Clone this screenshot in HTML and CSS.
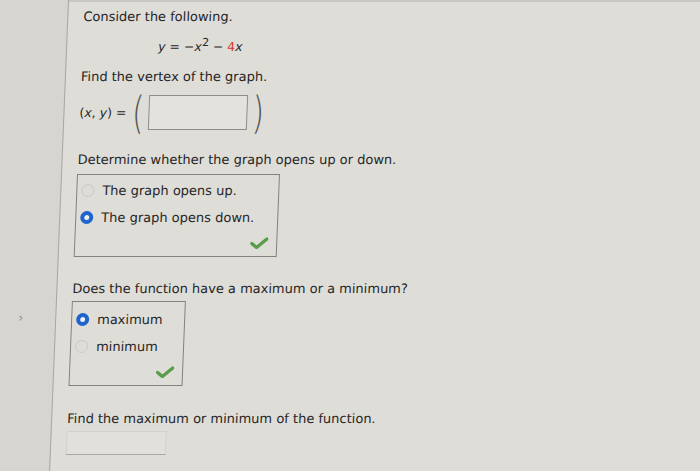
FILE: index.html
```html
<!DOCTYPE html>
<html>
<head>
<meta charset="utf-8">
<link rel="stylesheet" href="styles.css">
</head>
<body>
<div class="frame">
<div class="screen">
  <div class="sidebar"><span class="mark">›</span></div>
  <div class="main">
    <p class="line first">Consider the following.</p>
    <p class="eq"><i>y</i> = −<i>x</i><sup>2</sup> − <span class="red">4</span><i>x</i></p>
    <p class="line gap14">Find the vertex of the graph.</p>
    <div class="vertex">
      <span class="xy">(<i>x</i>, <i>y</i>) =</span>
      <span class="paren">(</span>
      <span class="answer"></span>
      <span class="paren">)</span>
    </div>
    <p class="line gap15">Determine whether the graph opens up or down.</p>
    <div class="choices wide">
      <div class="opt"><span class="radio"></span>The graph opens up.</div>
      <div class="opt"><span class="radio on"></span>The graph opens down.</div>
      <div class="checkrow"><svg class="check" viewBox="0 0 18 12" width="18" height="12"><path d="M1.5 6.5 L6.5 10.5 L16.5 2" fill="none" stroke="#5a9c4e" stroke-width="3.4" stroke-linecap="round" stroke-linejoin="round"/></svg></div>
    </div>
    <p class="line gap24">Does the function have a maximum or a minimum?</p>
    <div class="choices narrow">
      <div class="opt"><span class="radio on"></span>maximum</div>
      <div class="opt"><span class="radio"></span>minimum</div>
      <div class="checkrow"><svg class="check" viewBox="0 0 18 12" width="18" height="12"><path d="M1.5 6.5 L6.5 10.5 L16.5 2" fill="none" stroke="#5a9c4e" stroke-width="3.4" stroke-linecap="round" stroke-linejoin="round"/></svg></div>
    </div>
    <p class="line gap25">Find the maximum or minimum of the function.</p>
    <div class="blank"></div>
  </div>
</div>
</div>
</body>
</html>
```

FILE: styles.css
```css
html, body {
  margin: 0;
  padding: 0;
  width: 700px;
  height: 471px;
  overflow: hidden;
  background: #dfddd8;
}
.frame {
  width: 700px;
  height: 471px;
  overflow: hidden;
}
.screen {
  display: flex;
  height: 471px;
  width: 700px;
  transform: skewX(-2.3deg);
  transform-origin: 0 0;
  font-family: "DejaVu Sans", Verdana, sans-serif;
  font-size: 13px;
  color: #262626;
}
.sidebar {
  width: 68px;
  flex: none;
  background: #d7d5d0;
  border-right: 1px solid #a9a7a2;
  position: relative;
}
.mark {
  position: absolute;
  left: 31px;
  top: 310px;
  color: #8e8c88;
  font-size: 13px;
}
.main {
  flex: 1;
  background: #dfddd8;
  padding-left: 15px;
  border-top: 2px solid #c9c7c2;
  box-sizing: border-box;
}
p { margin: 0; }
.line { line-height: 16px; }
.first { margin-top: 7px; }
.eq {
  margin-top: 14px;
  line-height: 16px;
  padding-left: 76px;
  font-size: 12.5px;
}
.eq sup { font-size: 11px; line-height: 0; }
.red { color: #d23b36; }
.gap14 { margin-top: 14px; }
.gap15 { margin-top: 15px; }
.gap24 { margin-top: 24px; }
.gap25 { margin-top: 25px; }
.vertex {
  margin-top: 3px;
  height: 49px;
  display: flex;
  align-items: center;
}
.xy { font-size: 12.5px; margin-right: 3px; }
.paren {
  font-size: 44px;
  font-weight: 200;
  line-height: 49px;
  color: #555;
  transform: scaleX(0.7);
}
.answer {
  width: 97px;
  height: 33px;
  border: 1px solid #8e8d89;
  background: #e4e2dd;
  margin: 0 2px;
}
.choices {
  border: 1px solid #838280;
  box-sizing: border-box;
  padding: 2px 0 0 4px;
}
.wide { margin-top: 6px; width: 203px; height: 83px; }
.narrow { margin-top: 4px; width: 114px; height: 85px; padding-top: 4px; }
.opt {
  display: flex;
  align-items: center;
  height: 27px;
  line-height: 16px;
}
.radio {
  width: 13px;
  height: 13px;
  box-sizing: border-box;
  border-radius: 50%;
  border: 1px solid #cccac5;
  background: #dedcd7;
  margin-right: 8px;
  flex: none;
}
.radio.on {
  border: 4px solid #1f63cc;
  background: #eef1f6;
}
.checkrow {
  display: flex;
  justify-content: flex-end;
  padding-right: 8px;
  padding-top: 6px;
}
.blank {
  margin-top: 4px;
  width: 98px;
  height: 22px;
  border: 1px solid #d3d1cc;
  border-bottom-color: #a9a7a3;
  background: #e2e0db;
}
```
